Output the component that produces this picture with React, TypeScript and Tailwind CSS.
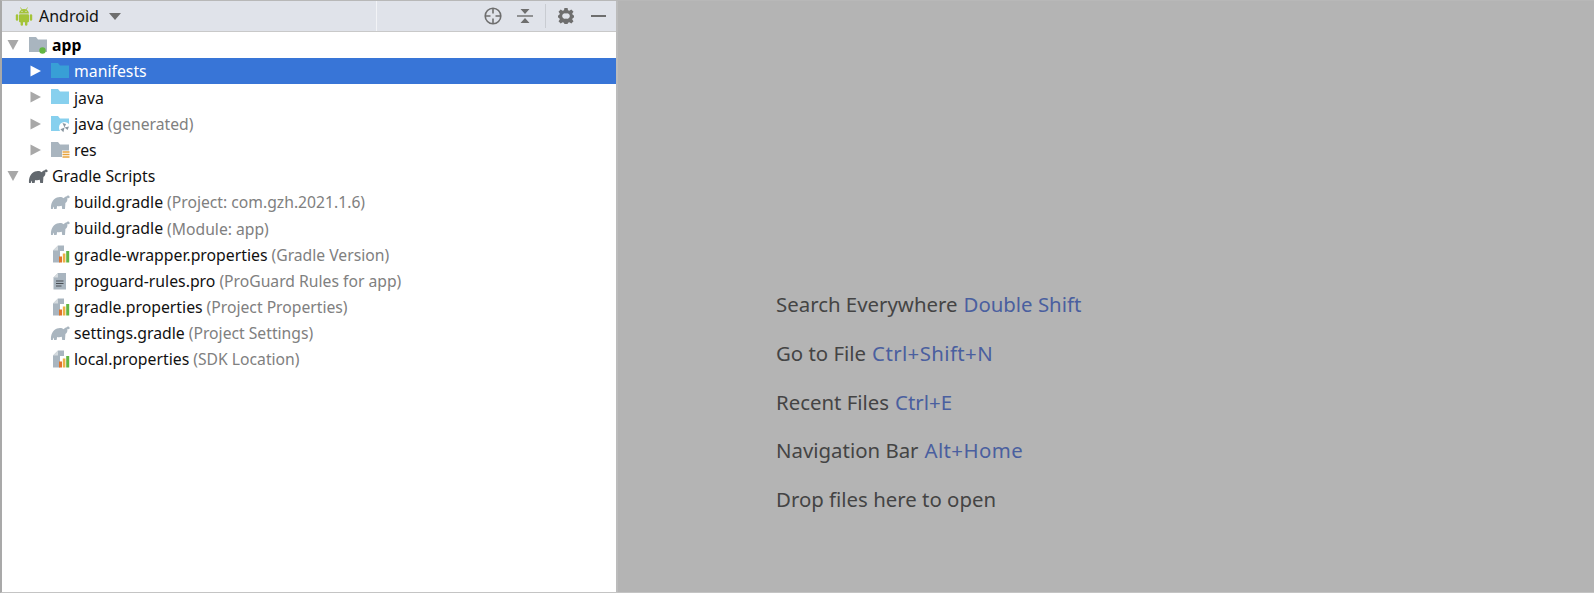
import React from "react";

const font = "font-['Noto_Sans','Open_Sans',sans-serif]";

function Arrow({ open, selected }: { open?: boolean; selected?: boolean }) {
  const fill = selected ? "#ffffff" : "#a8a8a8";
  return (
    <svg width="12" height="12" viewBox="0 0 12 12" className="shrink-0">
      {open ? <path d="M0.5 1H11.5L6 11Z" fill={fill} /> : <path d="M0.5 0.5L11 6L0.5 11.5Z" fill={fill} />}
    </svg>
  );
}

function Folder({ color = "#a9b5bf", children }: { color?: string; children?: React.ReactNode }) {
  return (
    <svg width="20" height="18" viewBox="0 0 20 18" className="shrink-0 overflow-visible">
      <path d="M1 1H8L10 3.5H19V16H1Z" fill={color} />
      {children}
    </svg>
  );
}

function Gradle({ color }: { color: string }) {
  return (
    <svg width="20" height="16" viewBox="0 0 20 16" className="shrink-0">
      <path
        d="M1 15C0.6 10 2.6 5.4 7 3.6C9.6 2.6 12.2 3 13.6 4.2C14.6 3 15.6 2.4 16.4 2.4C17.4 1 19.2 1.4 19.6 2.8C19.8 3.8 19 4.6 18.2 4C17.8 3.6 17.4 4 17.4 4.6C17.6 6.6 16.8 8.2 15.4 9L15 15H12.2L11.8 11.8C10.2 12.4 8.6 12.4 7.2 12L6.6 15H4L3.8 12.4C3.2 13 2.8 14 2.8 15Z"
        fill={color}
      />
    </svg>
  );
}

function Props() {
  return (
    <svg width="18" height="18" viewBox="0 0 18 18" className="shrink-0">
      <path d="M6 0.5H12V6H8V17.5H1V5.5Z" fill="#a9b5bf" />
      <path d="M1 5.5H6V0.5Z" fill="#d4dade" />
      <rect x="7" y="11.5" width="3" height="6" fill="#e0752d" />
      <rect x="10.8" y="8.5" width="2.6" height="9" fill="#eab045" />
      <rect x="14.2" y="6" width="3" height="11.5" fill="#62b543" />
    </svg>
  );
}

function ProFile() {
  return (
    <svg width="18" height="18" viewBox="0 0 18 18" className="shrink-0">
      <path d="M6 1H14V17.5H1.5V5.5Z" fill="#a9b5bf" />
      <path d="M1.5 5.5H6V1Z" fill="#d4dade" />
      <path d="M4 9H11.5M4 11.5H11.5M4 14H9.5" stroke="#4a4f54" strokeWidth="1.2" />
    </svg>
  );
}

function Android() {
  return (
    <svg width="18" height="19" viewBox="0 0 18 19">
      <path d="M4 6.5C4.3 3.8 6.4 2 9 2C11.6 2 13.7 3.8 14 6.5Z" fill="#a4c439" />
      <path d="M5.5 0.5L7 3M12.5 0.5L11 3" stroke="#a4c439" strokeWidth="0.8" />
      <rect x="4" y="7.2" width="10" height="8" rx="1" fill="#a4c439" />
      <rect x="0.8" y="7.2" width="2.4" height="6.5" rx="1.2" fill="#a4c439" />
      <rect x="14.8" y="7.2" width="2.4" height="6.5" rx="1.2" fill="#a4c439" />
      <rect x="5.6" y="14" width="2.4" height="4.8" rx="1.2" fill="#a4c439" />
      <rect x="10" y="14" width="2.4" height="4.8" rx="1.2" fill="#a4c439" />
      <circle cx="7" cy="4.4" r="0.6" fill="#e0e3ea" />
      <circle cx="11" cy="4.4" r="0.6" fill="#e0e3ea" />
    </svg>
  );
}

type RowProps = {
  indent?: boolean;
  arrow?: "open" | "closed";
  icon: React.ReactNode;
  name: string;
  hint?: string;
  bold?: boolean;
  selected?: boolean;
};

function Row({ indent, arrow, icon, name, hint, bold, selected }: RowProps) {
  return (
    <div className={`flex h-[26.18px] items-center ${indent ? "pl-[28px]" : "pl-[4px]"} ${selected ? "bg-[#3875d7]" : ""}`}>
      <div className={`flex shrink-0 items-center ${indent ? "w-[20px]" : "w-[22px] pl-[1px]"}`}>
        {arrow && <Arrow open={arrow === "open"} selected={selected} />}
      </div>
      <div className="flex w-[24px] shrink-0 items-center">{icon}</div>
      <span className={`whitespace-nowrap pt-[2px] text-[15.8px] ${bold ? "font-bold text-black" : selected ? "text-white" : "text-[#111111]"}`}>
        {name}
      </span>
      {hint && <span className="ml-[4px] whitespace-nowrap pt-[2px] text-[15.7px] text-[#808080]">{hint}</span>}
    </div>
  );
}

function Tip({ label, keys, wide }: { label: string; keys?: string; wide?: boolean }) {
  return (
    <div className="flex h-[48.75px] items-center whitespace-nowrap text-[20.4px] text-[#444444]">
      {label}
      {keys && <span className={`ml-[6px] text-[#4a5f9f] ${wide ? "tracking-[0.4px]" : ""}`}>{keys}</span>}
    </div>
  );
}

export default function App() {
  return (
    <div className={`flex h-[593px] w-[1594px] overflow-hidden border-t border-b border-l-2 border-t-[#b8b8b8] border-b-[#c4c4c4] border-l-[#a9a9a9] bg-white ${font}`}>
      <div className="flex w-[614px] shrink-0 flex-col">
        <div className="flex h-[31px] items-center border-b border-[#c9c9c9] bg-[#e0e3ea]">
          <div className="flex h-full w-[375px] shrink-0 items-center border-r border-[#f2f3f6] pl-[13px]">
            <Android />
            <span className="ml-[6px] text-[16px] text-[#111111]">Android</span>
            <svg width="12" height="7" viewBox="0 0 12 7" className="ml-[10px]">
              <path d="M0 0H12L6 7Z" fill="#6e6e6e" />
            </svg>
          </div>
          <div className="flex flex-1 items-center justify-end pr-[10px]">
            <svg width="18" height="18" viewBox="0 0 18 18" fill="none" stroke="#6e6e6e" strokeWidth="1.6">
              <circle cx="9" cy="9" r="7.8" />
              <path d="M9 1.5V6.5M9 11.5V16.5M1.5 9H6.5M11.5 9H16.5" />
            </svg>
            <svg width="16" height="16" viewBox="0 0 16 16" className="ml-[15px]">
              <path d="M0 8H16" stroke="#6e6e6e" strokeWidth="1.4" />
              <path d="M3.5 1H12.5L8 6ZM3.5 15H12.5L8 10Z" fill="#6e6e6e" />
            </svg>
            <div className="ml-[12px] h-[24px] w-px bg-[#c9ccd2]" />
            <svg width="16" height="16" viewBox="0 0 16 16" className="ml-[12px]">
              <path
                fillRule="evenodd"
                d="M6.4 0H9.6L10 2.2L11.4 2.8L13.3 1.5L15.5 3.7L14.2 5.6L14.8 7L16 7.4V9.6L14.8 10L14.2 11.4L15.5 13.3L13.3 15.5L11.4 14.2L10 14.8L9.6 16H6.4L6 14.8L4.6 14.2L2.7 15.5L0.5 13.3L1.8 11.4L1.2 10L0 9.6V7.4L1.2 7L1.8 5.6L0.5 3.7L2.7 1.5L4.6 2.8L6 2.2ZM8 5.4A2.8 2.8 0 1 0 8 10.6A2.8 2.8 0 1 0 8 5.4Z"
                fill="#6e6e6e"
              />
            </svg>
            <div className="ml-[17px] h-[2px] w-[15px] bg-[#6e6e6e]" />
          </div>
        </div>
        <div className="flex-1">
          <Row
            arrow="open"
            name="app"
            bold
            icon={
              <Folder>
                <circle cx="14.5" cy="14.5" r="3.2" fill="#62b543" />
              </Folder>
            }
          />
          <Row indent arrow="closed" selected name="manifests" icon={<Folder color="#389fd6" />} />
          <Row indent arrow="closed" name="java" icon={<Folder color="#87d0ee" />} />
          <Row
            indent
            arrow="closed"
            name="java"
            hint="(generated)"
            icon={
              <Folder color="#87d0ee">
                <circle cx="14.5" cy="12.5" r="5.5" fill="#ffffff" />
                <path d="M14.5 12.5L12.5 8L16 9ZM14.5 12.5L19 11.5L17.6 15ZM14.5 12.5L13.4 17.2L10.4 14.2Z" fill="#8a96a0" />
              </Folder>
            }
          />
          <Row
            indent
            arrow="closed"
            name="res"
            icon={
              <Folder>
                <rect x="12" y="9.5" width="8" height="8.5" fill="#ffffff" />
                <path d="M12.5 11H19.5M12.5 13.5H19.5M12.5 16H19.5" stroke="#e8a33d" strokeWidth="1.4" />
              </Folder>
            }
          />
          <Row arrow="open" name="Gradle Scripts" icon={<Gradle color="#62686e" />} />
          <Row indent name="build.gradle" hint="(Project: com.gzh.2021.1.6)" icon={<Gradle color="#a9b5bf" />} />
          <Row indent name="build.gradle" hint="(Module: app)" icon={<Gradle color="#a9b5bf" />} />
          <Row indent name="gradle-wrapper.properties" hint="(Gradle Version)" icon={<div className="pl-[2px]"><Props /></div>} />
          <Row indent name="proguard-rules.pro" hint="(ProGuard Rules for app)" icon={<div className="pl-[2px]"><ProFile /></div>} />
          <Row indent name="gradle.properties" hint="(Project Properties)" icon={<div className="pl-[2px]"><Props /></div>} />
          <Row indent name="settings.gradle" hint="(Project Settings)" icon={<Gradle color="#a9b5bf" />} />
          <Row indent name="local.properties" hint="(SDK Location)" icon={<div className="pl-[2px]"><Props /></div>} />
        </div>
      </div>
      <div className="flex-1 border-l-2 border-[#bcbcbc] bg-[#b4b4b4] pl-[158px] pt-[279px]">
        <Tip label="Search Everywhere" keys="Double Shift" />
        <Tip label="Go to File" keys="Ctrl+Shift+N" wide />
        <Tip label="Recent Files" keys="Ctrl+E" />
        <Tip label="Navigation Bar" keys="Alt+Home" wide />
        <Tip label="Drop files here to open" />
      </div>
    </div>
  );
}
